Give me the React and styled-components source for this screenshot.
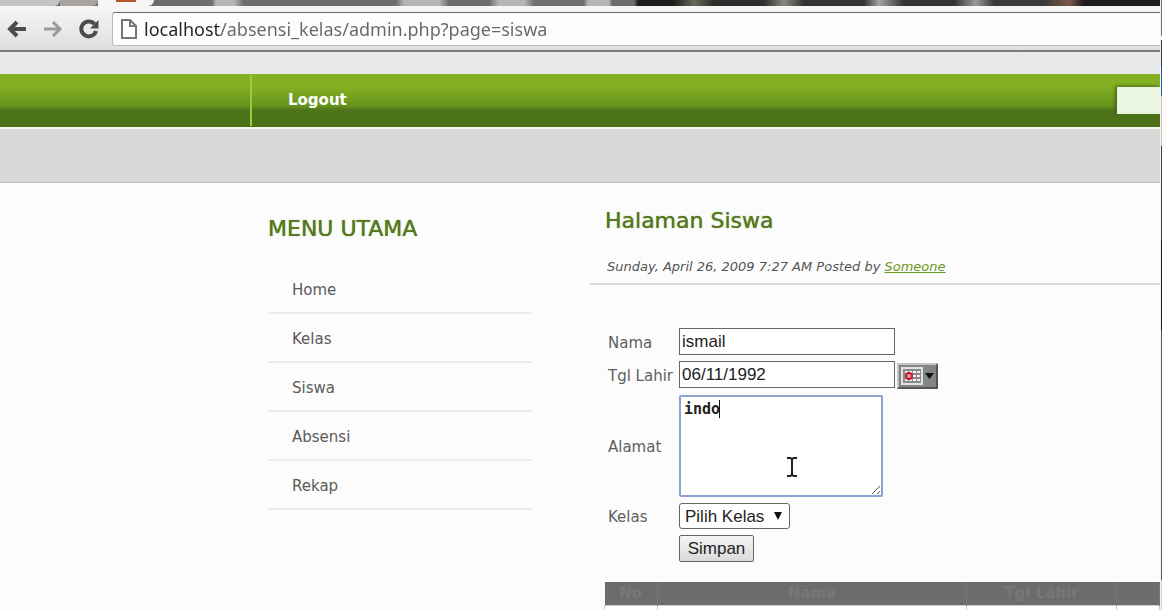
import styled, { createGlobalStyle } from "styled-components";

const MENU = ["Home", "Kelas", "Siswa", "Absensi", "Rekap"];

const App = () => {
  return (
    <>
      <GlobalStyle />
      <Screen>
        <Browser>
          <TabStrip>
            <Tab $tone="#c4c4c6" $width="60px" />
            <Tab $tone="#a9a5a3" $width="38px" />
            <Tab $tone="#f6f6f6" $width="56px">
              <Favicon />
            </Tab>
            <TabRest />
          </TabStrip>
          <Toolbar>
            <NavButton aria-label="Back">
              <svg width="20" height="18" viewBox="0 0 20 18" fill="none" stroke="#4c4c4c" strokeWidth="4">
                <path d="M19 9H4M10 2L3 9l7 7" />
              </svg>
            </NavButton>
            <NavButton aria-label="Forward">
              <svg width="20" height="18" viewBox="0 0 20 18" fill="none" stroke="#9a9a9a" strokeWidth="3">
                <path d="M1 9h15M10 2l7 7-7 7" />
              </svg>
            </NavButton>
            <NavButton aria-label="Reload">
              <svg width="20" height="20" viewBox="0 0 20 20" fill="none">
                <path d="M15.500 5A7.500 7.500 0 1 0 17 12" stroke="#4c4c4c" strokeWidth="4" />
                <path d="M19.500 1v8.500H11z" fill="#4c4c4c" />
              </svg>
            </NavButton>
            <Address>
              <svg width="16" height="20" viewBox="0 0 16 20" fill="#fff" stroke="#777" strokeWidth="2">
                <path d="M1 1h8l6 6v12H1zM9 1v6h6" />
              </svg>
              <Url aria-label="Address" defaultValue="localhost/absensi_kelas/admin.php?page=siswa" />
            </Address>
          </Toolbar>

          <TopGap />
          <NavBar>
            <LogoutLink href="#logout">Logout</LogoutLink>
            <Search aria-label="Search" />
          </NavBar>
          <Banner />

          <Content>
            <Sidebar>
              <Title>MENU UTAMA</Title>
              <Menu>
                {MENU.map((name) => (
                  <li key={name}>
                    <a href={"#" + name.toLowerCase()}>{name}</a>
                  </li>
                ))}
              </Menu>
            </Sidebar>

            <Main>
              <PageTitle>Halaman Siswa</PageTitle>
              <Meta>
                Sunday, April 26, 2009 7:27 AM Posted by <a href="#someone">Someone</a>
              </Meta>
              <Form onSubmit={(e) => e.preventDefault()}>
                <label htmlFor="nama">Nama</label>
                <TextBox id="nama" defaultValue="ismail" />

                <label htmlFor="tgl">Tgl Lahir</label>
                <DateField>
                  <TextBox id="tgl" defaultValue="06/11/1992" />
                  <Picker type="button" aria-label="Pilih tanggal">
                    <svg width="37" height="22" viewBox="0 0 37 22">
                      <path d="M3 3h20v16H3z" fill="#8b8b8b" stroke="#e2e2e2" strokeWidth="2" />
                      <path d="M6 7h16M6 11h16M6 15h16" stroke="#eee" strokeWidth="2" strokeDasharray="3 1" />
                      <circle cx="10" cy="11" r="3" fill="#d9a0aa" stroke="#c2183c" strokeWidth="2" />
                      <path d="M26 8h9l-4.500 6z" fill="#111" />
                    </svg>
                  </Picker>
                </DateField>

                <label htmlFor="alamat">Alamat</label>
                <AreaWrap>
                  <Area id="alamat" defaultValue="indo" />
                  <Caret />
                  <Pointer width="12" height="22" viewBox="0 0 12 22" fill="none" stroke="#222" strokeWidth="2">
                    <path d="M1 2h3l2 1 2-1h3M6 3v16M1 20h3l2-1 2 1h3" />
                  </Pointer>
                  <Grip width="10" height="10" viewBox="0 0 10 10" stroke="#555">
                    <path d="M1 9L9 1M6 9l3-3" />
                  </Grip>
                </AreaWrap>

                <label htmlFor="kelas">Kelas</label>
                <SelectWrap>
                  <Select id="kelas">
                    <option>Pilih Kelas</option>
                  </Select>
                  <Arrow width="8" height="8" viewBox="0 0 8 8">
                    <path d="M0 0h8L4 8z" fill="#111" />
                  </Arrow>
                </SelectWrap>

                <Submit type="submit">Simpan</Submit>
              </Form>

              <Table>
                <colgroup>
                  <col width="53" />
                  <col width="309" />
                  <col width="150" />
                  <col />
                </colgroup>
                <thead>
                  <tr>
                    <th>No</th>
                    <th>Nama</th>
                    <th>Tgl Lahir</th>
                    <th></th>
                  </tr>
                </thead>
                <tbody>
                  <tr>
                    <td></td>
                    <td></td>
                    <td></td>
                    <td></td>
                  </tr>
                </tbody>
              </Table>
            </Main>
          </Content>
        </Browser>
        <ScreenEdge />
      </Screen>
    </>
  );
};

const GlobalStyle = createGlobalStyle`
  * {
    box-sizing: border-box;
  }
  body {
    margin: 0;
    overflow: hidden;
    background: #fcfcfc;
    color: #5f5f5f;
    font-family: "DejaVu Sans", Verdana, sans-serif;
    font-size: 15px;
  }
`;

const Screen = styled.div`
  display: flex;
  height: 100vh;
  overflow: hidden;
`;

const Browser = styled.div`
  flex: 1;
  min-width: 0;
`;

const ScreenEdge = styled.div`
  width: 2px;
  background: linear-gradient(
    #8a6f60 0 36px,
    #fff 36px 40px,
    #333 40px 66px,
    #2a5a9a 66px 96px,
    #e0bfa4 96px 146px,
    #4a372e 146px 240px,
    #1c1c22 240px 330px,
    #6a564b 330px 580px,
    #e5c9b8 580px
  );
  border-left: 1px solid #f4f4f4;
`;

const TabStrip = styled.div`
  display: flex;
  height: 6px;
  background: #6d6d6d;
`;

const Tab = styled.div`
  display: flex;
  justify-content: center;
  width: ${({ $width }) => $width};
  background: ${({ $tone }) => $tone};
  border-radius: 0 0 6px 0;
`;

const Favicon = styled.div`
  width: 20px;
  height: 2px;
  background: #b9552c;
`;

const TabRest = styled.div`
  flex: 1;
  background: linear-gradient(
    90deg,
    #6d6d6d 58px,
    #b5b5b5 62px 80px,
    #6d6d6d 90px 242px,
    #b5b5b5 250px 285px,
    #6d6d6d 295px 335px,
    #b5b5b5 345px 370px,
    #707070 380px 430px,
    #b5b5b5 434px 455px,
    #6d6d6d 458px 480px,
    #1e1e1e 484px 520px,
    #6a6a5a 540px,
    #2e2e2c 560px 610px,
    #8a8a80 630px,
    #333 650px 710px,
    #a5a5a5 725px,
    #333 750px 800px,
    #999 822px,
    #3a3a38 840px 890px,
    #7a5a48 915px,
    #1c1c1c 930px
  );
`;

const Toolbar = styled.div`
  display: flex;
  align-items: center;
  gap: 16px;
  height: 46px;
  padding: 1px 0 0 7px;
  background: linear-gradient(#f7f7f7, #dedede);
  border-bottom: 2px solid #7c7c7c;
`;

const NavButton = styled.button`
  display: flex;
  padding: 0;
  border: 0;
  background: none;
`;

const Address = styled.div`
  display: flex;
  flex: 1;
  align-items: center;
  gap: 7px;
  height: 34px;
  margin-left: -3px;
  padding-left: 8px;
  background: #fdfdfd;
  border: 1px solid #bbb;
  border-top-color: #6e6e6e;
  border-right: 0;
  border-radius: 3px 0 0 3px;
`;

const Url = styled.input`
  flex: 1;
  height: 30px;
  padding: 0;
  border: 0;
  outline: 0;
  color: #666;
  font-family: "Noto Sans", sans-serif;
  font-size: 18px;
  background: linear-gradient(90deg, #222 77px, #666 77px);
  background-clip: text;
  -webkit-text-fill-color: transparent;
`;

const TopGap = styled.div`
  height: 22px;
  background: #e9e9e9;
`;

const NavBar = styled.nav`
  display: flex;
  align-items: center;
  justify-content: space-between;
  height: 53px;
  padding-left: 250px;
  background: linear-gradient(#84b224 0, #82ae22 14px, #64921c 32px, #4e7519 36px, #4a6f16 100%);
`;

const LogoutLink = styled.a`
  height: 51px;
  padding-left: 36px;
  border-left: 2px solid #9acb3c;
  color: #fff;
  font-weight: bold;
  line-height: 51px;
  text-decoration: none;
`;

const Search = styled.input`
  width: 43px;
  height: 27px;
  border: 0;
  border-radius: 0;
  background: #eaf6e0;
  box-shadow: -2px -1px 3px #47691a;
`;

const Banner = styled.div`
  height: 56px;
  background: #d8d8d8;
  border-top: 2px solid #f2f6ea;
  border-bottom: 1px solid #c0c0c0;
`;

const Content = styled.div`
  display: grid;
  grid-template-columns: 264px 1fr;
  column-gap: 58px;
  padding-left: 268px;
`;

const Sidebar = styled.aside`
  padding-top: 33px;
`;

const Title = styled.h2`
  margin: 0;
  color: #56791e;
  font-size: 22px;
  font-weight: normal;
  line-height: 26px;
  text-shadow: 0 0 1px #56791e;
`;

const PageTitle = styled(Title)`
  padding-left: 15px;
`;

const Menu = styled.ul`
  margin: 23px 0 0;
  padding: 0;
  list-style: none;

  a {
    display: block;
    height: 49px;
    padding-left: 24px;
    border-bottom: 2px solid #ebebeb;
    color: #5a5a5a;
    line-height: 50px;
    text-decoration: none;
  }
`;

const Main = styled.main`
  padding-top: 25px;
`;

const Meta = styled.p`
  margin: 24px 0 0;
  padding: 0 0 7px 17px;
  border-bottom: 2px solid #d8d8d8;
  color: #555;
  font-size: 13px;
  font-style: italic;
  line-height: 18px;

  a {
    color: #6b9a1e;
  }
`;

const Form = styled.form`
  display: grid;
  grid-template-columns: 71px max-content;
  align-items: center;
  row-gap: 6px;
  padding: 43px 0 20px 18px;

  label {
    padding-top: 2px;
    white-space: nowrap;
  }
`;

const TextBox = styled.input`
  width: 216px;
  height: 27px;
  padding: 0 2px;
  border: 1px solid #666;
  background: #fff;
  color: #222;
  font-family: "Liberation Sans", Arial, sans-serif;
  font-size: 17px;
`;

const DateField = styled.div`
  display: flex;
  align-items: flex-start;
  gap: 2px;
  height: 28px;

  button {
    align-self: flex-end;
  }
`;

const Picker = styled.button`
  display: flex;
  align-items: center;
  justify-content: center;
  width: 41px;
  height: 26px;
  padding: 0;
  border: 2px solid;
  border-color: #c4c4c4 #555 #555 #c4c4c4;
  background: #858585;
`;

const AreaWrap = styled.div`
  position: relative;
  width: 204px;
  height: 102px;
`;

const Area = styled.textarea`
  width: 100%;
  height: 100%;
  padding: 3px;
  border: 2px solid #8da2cf;
  border-radius: 2px;
  outline: 0;
  background: #fff;
  color: #222;
  font-family: "DejaVu Sans Mono", monospace;
  font-size: 15px;
  font-weight: bold;
  resize: none;
`;

const Caret = styled.span`
  position: absolute;
  top: 5px;
  left: 40px;
  width: 1px;
  height: 18px;
  background: #111;
`;

const Pointer = styled.svg`
  position: absolute;
  top: 61px;
  left: 107px;
`;

const Grip = styled.svg`
  position: absolute;
  right: 2px;
  bottom: 2px;
`;

const SelectWrap = styled.div`
  position: relative;
  width: 111px;
  height: 26px;
`;

const Select = styled.select`
  width: 100%;
  height: 100%;
  padding: 0 5px;
  border: 1px solid #666;
  border-radius: 3px;
  appearance: none;
  background: #fff;
  color: #222;
  font-family: "Liberation Sans", Arial, sans-serif;
  font-size: 17px;
`;

const Arrow = styled.svg`
  position: absolute;
  top: 9px;
  right: 8px;
  pointer-events: none;
`;

const Submit = styled.button`
  grid-column: 2;
  width: 75px;
  height: 27px;
  padding: 0;
  border: 1px solid #666;
  border-radius: 2px;
  background: linear-gradient(#f5f5f5, #dadada);
  color: #222;
  font-family: "Liberation Sans", Arial, sans-serif;
  font-size: 17px;
`;

const Table = styled.table`
  width: calc(100% - 14px);
  margin-left: 14px;
  table-layout: fixed;
  border-collapse: collapse;

  th {
    height: 23px;
    padding: 0;
    border-right: 1px solid #777;
    background: #6c6c6c;
    color: #777;
    font-size: 15px;
    line-height: 20px;
  }

  td {
    height: 23px;
    border: 1px solid #ccc;
    background: #fff;
  }
`;

export default App;
